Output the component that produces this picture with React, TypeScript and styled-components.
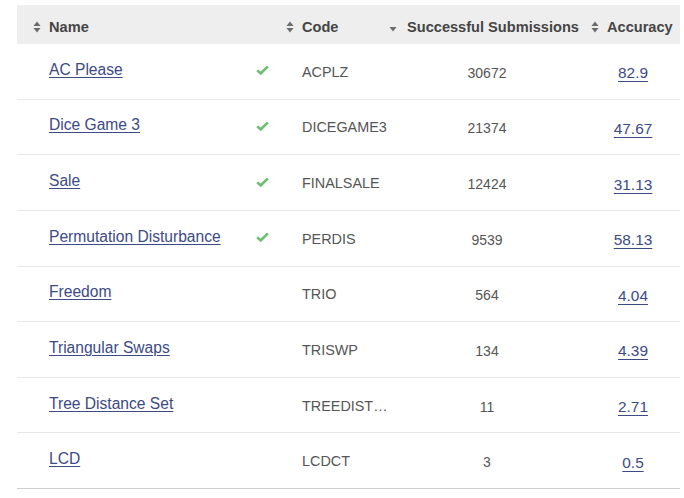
import React from "react";
import styled, { createGlobalStyle } from "styled-components";

const GlobalStyle = createGlobalStyle`
  html, body {
    margin: 0;
    padding: 0;
    background: #ffffff;
    font-family: "Liberation Sans", Arial, sans-serif;
  }
`;

const Page = styled.div`
  padding: 5px 0 0 17px;
`;

const Table = styled.div`
  width: 663px;
  display: grid;
  grid-template-columns: 253px 103px 210px 97px;
`;

const HeaderCell = styled.div<{ $gap?: number; $pad?: number }>`
  height: 39px;
  box-sizing: border-box;
  padding: 5px 0 0 ${(p) => p.$pad ?? 16}px;
  background: #eeeeee;
  display: flex;
  align-items: center;
  gap: ${(p) => p.$gap ?? 8}px;
  color: #454545;
  font-weight: bold;
  font-size: 14.6px;
  white-space: nowrap;
`;

const SortIcon = styled.svg`
  width: 8px;
  height: 12px;
  flex: none;
  fill: #6b6b6b;
`;

const Cell = styled.div<{ $last?: boolean; $pad?: number; $center?: boolean; $shift?: number }>`
  height: 55.625px;
  box-sizing: border-box;
  border-bottom: 1px solid ${(p) => (p.$last ? "#cfcfcf" : "#e8e8e8")};
  display: flex;
  align-items: center;
  justify-content: ${(p) => (p.$center ? "center" : "flex-start")};
  padding-left: ${(p) => p.$pad ?? 0}px;
  padding-top: ${(p) => Math.max(0, p.$shift ?? 0)}px;
  padding-bottom: ${(p) => Math.max(0, -(p.$shift ?? 0))}px;
  white-space: nowrap;
`;

const NameCell = styled(Cell)`
  justify-content: space-between;
  padding-right: 1px;
`;

const NameLink = styled.a`
  color: #3c4a85;
  font-size: 15.6px;
  text-decoration: underline;
  text-decoration-thickness: 1px;
  text-underline-offset: 2px;
  cursor: pointer;
`;

const Check = styled.svg`
  width: 13px;
  height: 10px;
  flex: none;
  margin-top: 1px;
`;

const CodeText = styled.span`
  flex: none;
  color: #555555;
  font-size: 14.4px;
`;

const Count = styled.span`
  color: #555555;
  font-size: 14px;
`;

const AccuracyLink = styled.a`
  color: #3c4a85;
  font-size: 15.4px;
  text-decoration: underline;
  text-decoration-thickness: 1px;
  text-underline-offset: 3px;
  cursor: pointer;
`;

const BothSort = () => (
  <SortIcon viewBox="0 0 8 12">
    <path d="M4 0.5 L7.5 5 L0.5 5 Z" />
    <path d="M4 11.5 L7.5 7 L0.5 7 Z" />
  </SortIcon>
);

const DownSort = () => (
  <SortIcon viewBox="0 0 8 12">
    <path d="M4 10.5 L7.5 6 L0.5 6 Z" />
  </SortIcon>
);

const CheckMark = () => (
  <Check viewBox="0 0 13 10">
    <path
      d="M1.2 5.2 L4.8 8.4 L11.8 1.4"
      fill="none"
      stroke="#6cbf6f"
      strokeWidth="2.6"
      strokeLinejoin="miter"
    />
  </Check>
);

type Problem = {
  name: string;
  solved: boolean;
  code: string;
  subs: number;
  acc: string;
};

const problems: Problem[] = [
  { name: "AC Please", solved: true, code: "ACPLZ", subs: 30672, acc: "82.9" },
  { name: "Dice Game 3", solved: true, code: "DICEGAME3", subs: 21374, acc: "47.67" },
  { name: "Sale", solved: true, code: "FINALSALE", subs: 12424, acc: "31.13" },
  { name: "Permutation Disturbance", solved: true, code: "PERDIS", subs: 9539, acc: "58.13" },
  { name: "Freedom", solved: false, code: "TRIO", subs: 564, acc: "4.04" },
  { name: "Triangular Swaps", solved: false, code: "TRISWP", subs: 134, acc: "4.39" },
  { name: "Tree Distance Set", solved: false, code: "TREEDIST…", subs: 11, acc: "2.71" },
  { name: "LCD", solved: false, code: "LCDCT", subs: 3, acc: "0.5" },
];

export default function App() {
  return (
    <>
      <GlobalStyle />
      <Page>
        <Table>
          <HeaderCell>
            <BothSort />
            Name
          </HeaderCell>
          <HeaderCell>
            <BothSort />
            Code
          </HeaderCell>
          <HeaderCell $gap={10}>
            <DownSort />
            Successful Submissions
          </HeaderCell>
          <HeaderCell $pad={8}>
            <BothSort />
            Accuracy
          </HeaderCell>
          {problems.map((p, i) => {
            const last = i === problems.length - 1;
            return (
              <React.Fragment key={p.code}>
                <NameCell $last={last} $pad={32} $shift={-3}>
                  <NameLink>{p.name}</NameLink>
                  {p.solved && <CheckMark />}
                </NameCell>
                <Cell $last={last} $pad={32} $shift={1}>
                  <CodeText>{p.code}</CodeText>
                </Cell>
                <Cell $last={last} $pad={18} $center $shift={3}>
                  <Count>{p.subs}</Count>
                </Cell>
                <Cell $last={last} $pad={3} $center $shift={4}>
                  <AccuracyLink>{p.acc}</AccuracyLink>
                </Cell>
              </React.Fragment>
            );
          })}
        </Table>
      </Page>
    </>
  );
}
